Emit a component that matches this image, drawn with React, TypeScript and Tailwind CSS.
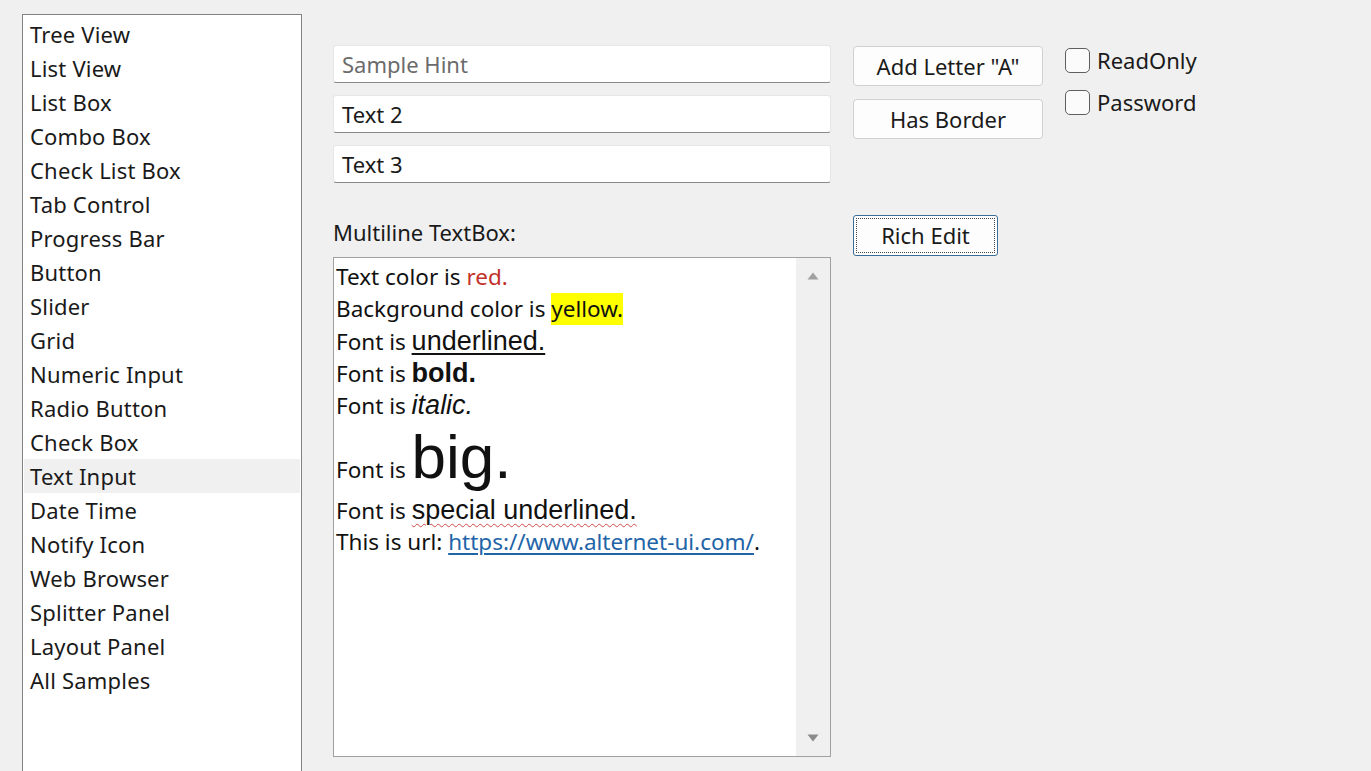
import * as React from "react";

const items = [
  "Tree View",
  "List View",
  "List Box",
  "Combo Box",
  "Check List Box",
  "Tab Control",
  "Progress Bar",
  "Button",
  "Slider",
  "Grid",
  "Numeric Input",
  "Radio Button",
  "Check Box",
  "Text Input",
  "Date Time",
  "Notify Icon",
  "Web Browser",
  "Splitter Panel",
  "Layout Panel",
  "All Samples",
];

const ui = "font-['Noto_Sans',sans-serif]";
const arial = "font-['Liberation_Sans',Arial,sans-serif]";

function TextField({ value, hint }: { value?: string; hint?: string }) {
  return (
    <div className="h-[38px] bg-white border border-[#e6e6e6] border-b-[#8a8a8a] rounded-[3px] flex items-center px-[8px] text-[22px]">
      {value ? (
        <span className="text-[#1a1a1a]">{value}</span>
      ) : (
        <span className="text-[#6b6b6b]">{hint}</span>
      )}
    </div>
  );
}

function Button({ label, focused }: { label: string; focused?: boolean }) {
  return (
    <div
      className={
        focused
          ? "h-[41px] bg-[#fdfdfd] border border-[#3a6d99] rounded-[3px] p-[2px]"
          : "h-[40px] bg-[#fdfdfd] border border-[#d0d0d0] rounded-[4px] flex items-center justify-center text-[22px] text-[#1a1a1a]"
      }
    >
      {focused ? (
        <div className="h-full border border-dotted border-[#444] flex items-center justify-center text-[22px] text-[#1a1a1a]">
          {label}
        </div>
      ) : (
        label
      )}
    </div>
  );
}

function Check({ label }: { label: string }) {
  return (
    <div className="flex items-center gap-[7px] text-[22px] text-[#1a1a1a] h-[26px]">
      <div className="w-[25px] h-[25px] rounded-[5px] border border-[#5f5f5f] bg-[#fbfbfb]" />
      <span>{label}</span>
    </div>
  );
}

export default function App() {
  return (
    <div className={`h-[771px] w-[1371px] overflow-hidden bg-[#f0f0f0] flex ${ui}`}>
      <div className="ml-[22px] mt-[14px] w-[280px] h-[800px] shrink-0 bg-white border border-[#828282] pt-[2px] px-px">
        {items.map((it) => (
          <div
            key={it}
            className={`h-[34px] flex items-center pl-[6px] text-[22px] tracking-[0.2px] text-[#1a1a1a] ${
              it === "Text Input" ? "bg-[#f0f0f0]" : ""
            }`}
          >
            {it}
          </div>
        ))}
      </div>

      <div className="ml-[31px] pt-[45px] flex flex-col">
        <div className="flex">
          <div className="w-[498px] flex flex-col gap-[12px]">
            <TextField hint="Sample Hint" />
            <TextField value="Text 2" />
            <TextField value="Text 3" />
          </div>
          <div className="ml-[22px] w-[190px] flex flex-col gap-[13px] pt-px">
            <Button label={'Add Letter "A"'} />
            <Button label="Has Border" />
          </div>
          <div className="ml-[22px] flex flex-col gap-[16px] pt-[2px]">
            <Check label="ReadOnly" />
            <Check label="Password" />
          </div>
        </div>

        <div className="flex mt-[32px]">
          <div className="w-[498px] flex flex-col">
            <div className="h-[42px] flex items-center pb-[8px] text-[22px] text-[#1a1a1a]">
              Multiline TextBox:
            </div>
            <div className="h-[500px] bg-white border border-[#a0a0a0] flex">
              <div className="flex-1 pl-[2px] pt-[3px] text-[22.5px] text-[#111] leading-[32px]">
                <div className="h-[32px]">
                  Text color is <span className="text-[#c3312a]">red.</span>
                </div>
                <div className="h-[32px]">
                  Background color is{" "}
                  <span className="bg-[#ffff00] inline-block leading-[32px]">yellow.</span>
                </div>
                <div className="h-[32px]">
                  Font is <span className={`${arial} text-[27px] underline underline-offset-[3px]`}>underlined.</span>
                </div>
                <div className="h-[32px]">
                  Font is <span className={`${arial} text-[27px] font-bold`}>bold.</span>
                </div>
                <div className="h-[32px]">
                  Font is <span className={`${arial} text-[27px] italic`}>italic.</span>
                </div>
                <div className="leading-[72px] h-[73px]">
                  Font is <span className={`${arial} text-[62px]`}>big.</span>
                </div>
                <div className="h-[32px]">
                  Font is{" "}
                  <span className={`${arial} text-[27px] underline decoration-wavy decoration-[#d04848] decoration-1 underline-offset-[4px]`}>
                    special underlined.
                  </span>
                </div>
                <div className="h-[32px]">
                  This is url:{" "}
                  <span className="text-[#2264a8] underline underline-offset-[3px]">https://www.alternet-ui.com/</span>.
                </div>
              </div>
              <div className="w-[34px] bg-[#f0f0f0] flex flex-col items-center justify-between pt-[14px] pb-[14px]">
                <svg width="12" height="8" viewBox="0 0 12 8">
                  <path d="M6 0.5 L11.5 7.5 L0.5 7.5 Z" fill="#a0a0a0" />
                </svg>
                <svg width="12" height="8" viewBox="0 0 12 8">
                  <path d="M0.5 0.5 L11.5 0.5 L6 7.5 Z" fill="#8a8a8a" />
                </svg>
              </div>
            </div>
          </div>
          <div className="ml-[22px] w-[145px]">
            <Button label="Rich Edit" focused />
          </div>
        </div>
      </div>
    </div>
  );
}
